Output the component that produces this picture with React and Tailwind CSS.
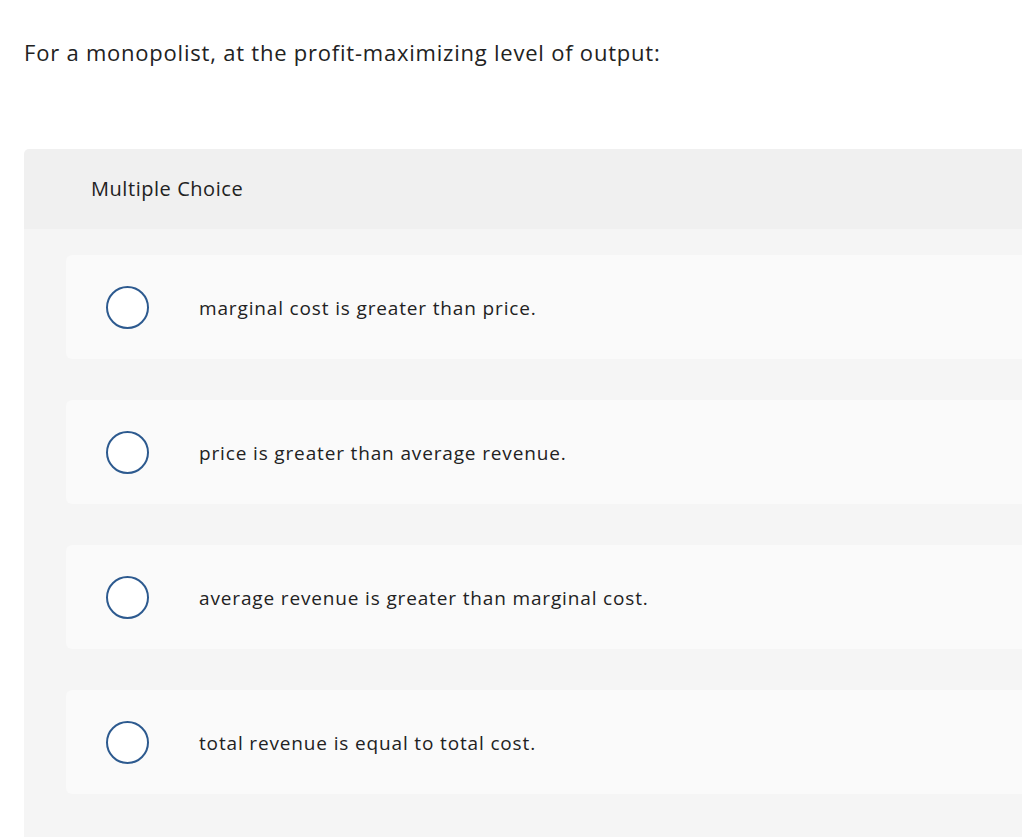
const options = [
  'marginal cost is greater than price.',
  'price is greater than average revenue.',
  'average revenue is greater than marginal cost.',
  'total revenue is equal to total cost.',
];

function Radio() {
  return (
    <span className="block w-[43px] h-[43px] rounded-full border-2 border-[#2d5a8f] bg-white shrink-0"></span>
  );
}

export default function App() {
  return (
    <div className="min-h-[837px] bg-white text-[#222] font-['Open_Sans','Lato',sans-serif] overflow-hidden">
      <div className="pl-6 pt-[36px] h-[149px]">
        <p className="text-[22px] leading-[32px] tracking-[0.78px]">For a monopolist, at the profit-maximizing level of output:</p>
      </div>

      <div className="ml-6 rounded-tl-[5px] overflow-hidden">
        <div className="h-20 bg-[#f0f0f0] flex items-center pl-[67px]">
          <span className="text-[20px] tracking-[0.55px]">Multiple Choice</span>
        </div>
        <div className="bg-[#f5f5f5] pl-[42px] pt-[26px] pb-10 flex flex-col gap-[41px] min-h-[608px]">
          {options.map((opt, i) => (
            <div key={i} className="h-[104px] bg-[#fafafa] rounded-l-[6px] flex items-center pl-10">
              <Radio />
              <span className="ml-[50px] pt-[3px] text-[19px] tracking-[0.85px]">{opt}</span>
            </div>
          ))}
        </div>
      </div>
    </div>
  );
}
